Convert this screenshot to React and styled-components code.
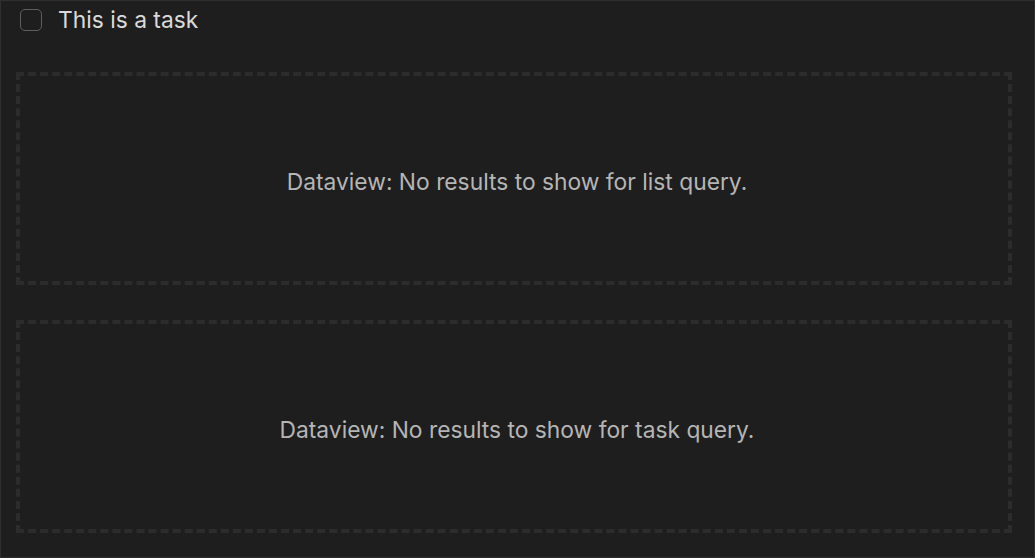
import styled, { createGlobalStyle } from 'styled-components';

const GlobalStyle = createGlobalStyle`
  html, body {
    margin: 0;
    padding: 0;
    background: #1e1e1e;
  }
  body {
    font-family: Inter, "Noto Sans", sans-serif;
  }
`;

const Page = styled.div`
  box-sizing: border-box;
  width: 1035px;
  height: 558px;
  background: #1e1e1e;
  border: 1px solid #2f2f2f;
  padding: 0 22px 0 15px;
  display: flex;
  flex-direction: column;
  overflow: hidden;
`;

const TaskRow = styled.label`
  display: flex;
  align-items: center;
  gap: 16px;
  height: 38px;
  padding-left: 4px;
  color: #dadada;
  font-size: 22.8px;
  line-height: 1;
  margin-bottom: 33px;
`;

const Checkbox = styled.span`
  box-sizing: border-box;
  width: 22px;
  height: 22px;
  border: 1.5px solid #5e5e5e;
  border-radius: 5px;
  flex-shrink: 0;
`;

const Results = styled.div`
  display: flex;
  flex-direction: column;
  gap: 35px;
`;

const EmptyBox = styled.div`
  box-sizing: border-box;
  height: 213px;
  border: 4px dashed #2c2c2c;
  display: flex;
  align-items: center;
  justify-content: center;
  color: #b5b5b5;
  font-size: 22.8px;
  padding: 6px 0 0 6px;
`;

export default function App() {
  return (
    <>
      <GlobalStyle />
      <Page>
        <TaskRow>
          <Checkbox />
          This is a task
        </TaskRow>
        <Results>
          <EmptyBox>Dataview: No results to show for list query.</EmptyBox>
          <EmptyBox>Dataview: No results to show for task query.</EmptyBox>
        </Results>
      </Page>
    </>
  );
}
